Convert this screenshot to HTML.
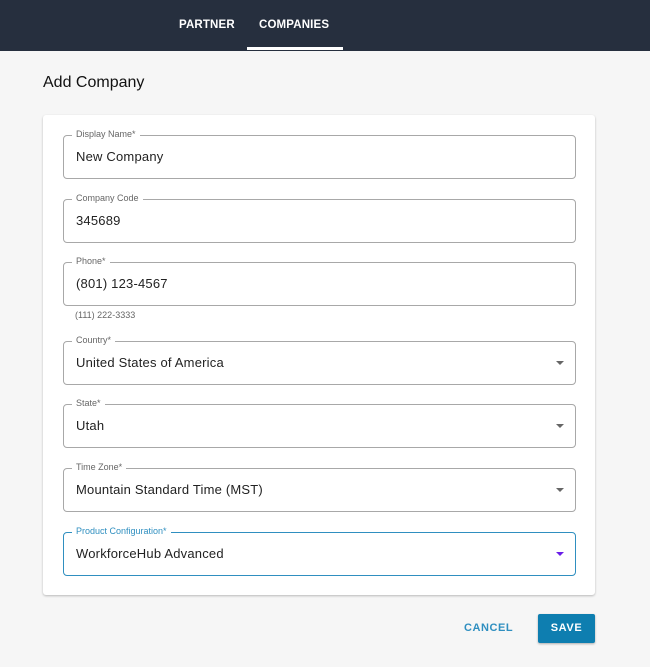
<!DOCTYPE html>
<html><head><style>
*{box-sizing:border-box;margin:0;padding:0}
body{width:650px;height:667px;background:#f6f6f6;font-family:"Liberation Sans",Arial,sans-serif;position:relative;overflow:hidden}
.hdr{position:absolute;left:0;top:0;width:650px;height:51px;background:#262f3e}
.tab{position:absolute;top:19px;color:#fff;font-size:11.5px;font-weight:bold;letter-spacing:.15px}
.ul{position:absolute;left:247px;top:47px;width:96px;height:3px;background:#fff}
h1{position:absolute;left:43px;top:74px;font-size:16px;font-weight:normal;color:#111}
.card{position:absolute;left:43px;top:115px;width:552px;height:480px;background:#fff;border-radius:3px;box-shadow:0 1px 2px rgba(0,0,0,.25)}
.f{position:absolute;left:63px;width:513px;height:44px;border:1px solid #a8a8a8;border-radius:4px;background:#fff}
.f .l{position:absolute;left:8px;top:-7px;background:#fff;padding:0 4px;font-size:9px;color:#666}
.f .v{position:absolute;left:12px;top:13px;font-size:13px;color:#222;letter-spacing:.2px}
.f .a{position:absolute;right:11px;top:19px;width:0;height:0;border-left:4px solid transparent;border-right:4px solid transparent;border-top:4px solid #666}
.act{border-color:#2f8fc0}
.act .l{color:#2f8fc0}
.act .a{border-top-color:#6a1ee8}
.help{position:absolute;left:75px;top:310px;font-size:9px;color:#666}
.cancel{position:absolute;left:464px;top:622px;font-size:11px;font-weight:bold;color:#2f8fc0;letter-spacing:.55px}
.save{position:absolute;left:538px;top:614px;width:57px;height:29px;background:#0e7eb0;border-radius:2px;color:#fff;font-size:11px;font-weight:bold;letter-spacing:.6px;text-align:center;line-height:29px;box-shadow:0 1px 2px rgba(0,0,0,.3)}
</style></head><body>
<div class="hdr"></div>
<div class="tab" style="left:179px">PARTNER</div>
<div class="tab" style="left:259px">COMPANIES</div>
<div class="ul"></div>
<h1>Add Company</h1>
<div class="card"></div>
<div class="f" style="top:135px"><span class="l">Display Name*</span><span class="v">New Company</span></div>
<div class="f" style="top:199px"><span class="l">Company Code</span><span class="v">345689</span></div>
<div class="f" style="top:262px"><span class="l">Phone*</span><span class="v">(801) 123-4567</span></div>
<div class="help">(111) 222-3333</div>
<div class="f" style="top:341px"><span class="l">Country*</span><span class="v">United States of America</span><span class="a"></span></div>
<div class="f" style="top:404px"><span class="l">State*</span><span class="v">Utah</span><span class="a"></span></div>
<div class="f" style="top:468px"><span class="l">Time Zone*</span><span class="v">Mountain Standard Time (MST)</span><span class="a"></span></div>
<div class="f act" style="top:532px"><span class="l">Product Configuration*</span><span class="v">WorkforceHub Advanced</span><span class="a"></span></div>
<div class="cancel">CANCEL</div>
<div class="save">SAVE</div>
</body></html>
